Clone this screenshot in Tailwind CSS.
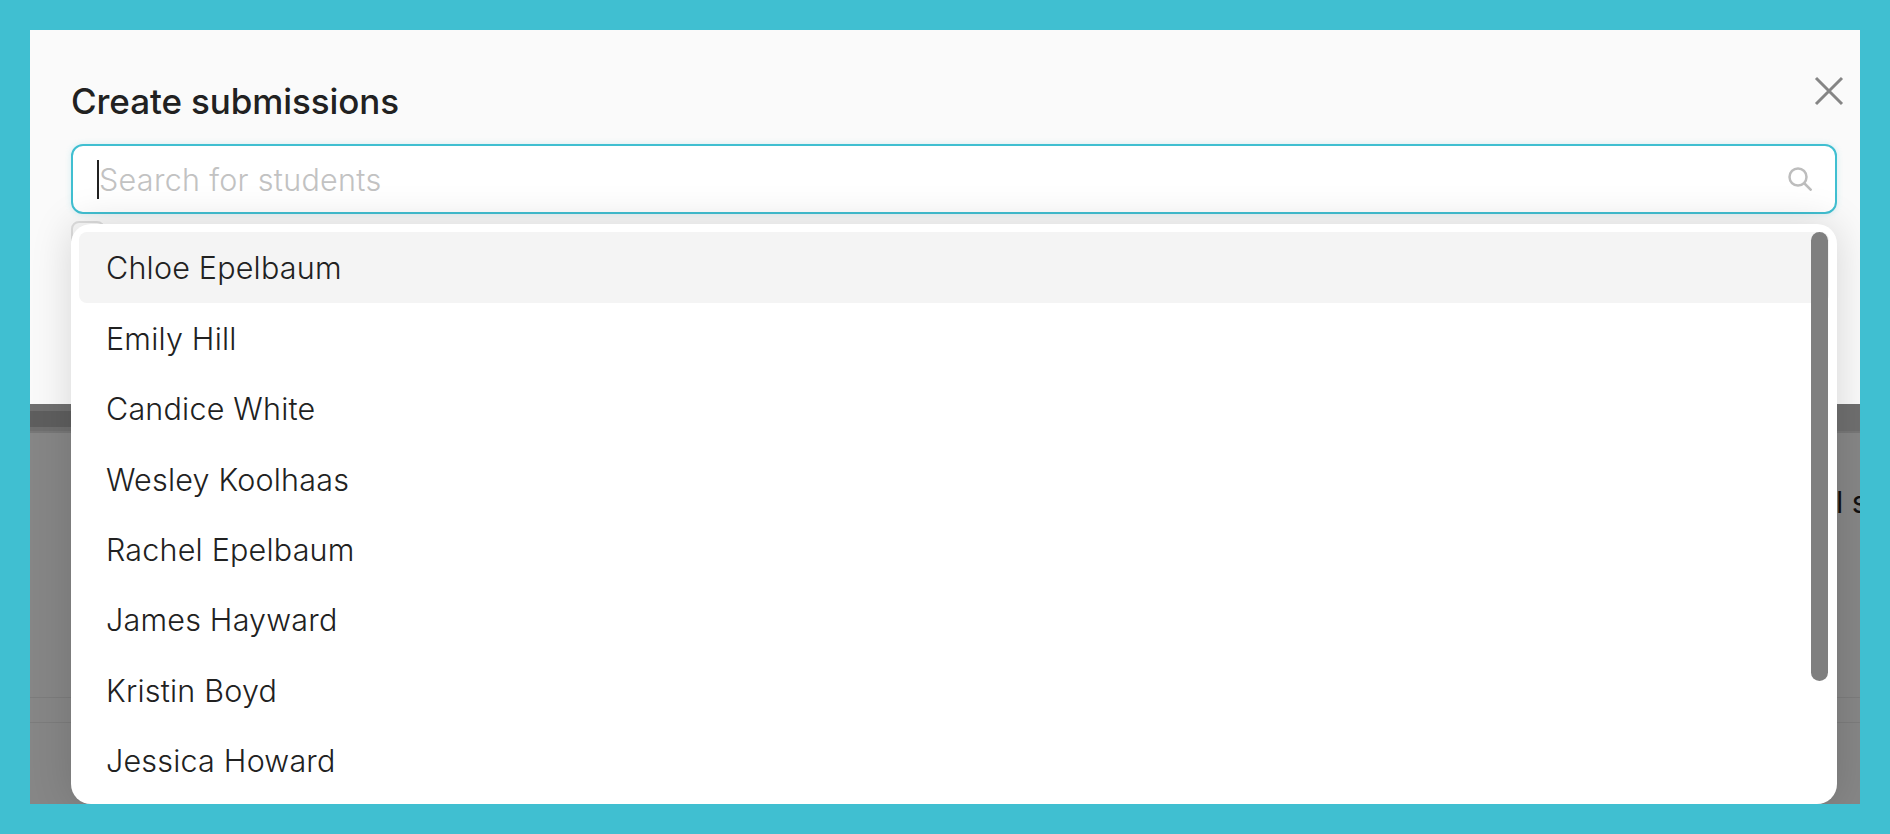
<!DOCTYPE html>
<html lang="en">
<head>
    <meta charset="UTF-8">
    <title>Create submissions</title>
    <script src="https://cdn.jsdelivr.net/npm/@tailwindcss/browser@4"></script>
</head>
<body class="bg-[#40bfd1] font-['Inter',sans-serif]">
    <div class="h-[834px] w-[1890px] p-[30px] overflow-hidden">
        <div class="relative h-[774px] w-[1830px] overflow-hidden bg-[#868686]">
            <!-- Page behind the modal -->
            <div class="absolute left-0 right-0 top-[374px] h-[27px] bg-[#6f6f6f]"></div>
            <div class="absolute left-0 top-[381px] h-[16px] w-[200px] bg-[#5e5e5e]"></div>
            <div class="absolute left-0 right-0 top-[401px] h-[2px] bg-[#777777]"></div>
            <div class="absolute left-0 right-0 top-[667px] h-[1px] bg-[#7c7c7c]"></div>
            <div class="absolute left-0 right-0 top-[692px] h-[1px] bg-[#7c7c7c]"></div>
            <div class="absolute left-[1806px] top-[454px] whitespace-nowrap text-[30px] leading-[36px] text-[#111]">l s</div>

            <!-- Modal -->
            <div class="relative h-[374px] bg-[#fafafa] pl-[41px] pr-[23px] pt-[51px]">
                <h2 class="text-[35px] leading-[40px] font-[550] tracking-[-0.1px] text-[#212121]">Create submissions</h2>
                <button class="absolute right-[16px] top-[46px] text-[#858585]">
                    <svg width="30" height="30" viewBox="0 0 30 30" fill="none" stroke="currentColor" stroke-width="3"><path d="M2 2 28 28M28 2 2 28"/></svg>
                </button>
                <div class="mt-[23px] flex h-[70px] items-center justify-between rounded-[12px] border-2 border-[#40bfd1] bg-white pl-[24px] pr-[23px] shadow-[0_0_6px_rgba(64,191,209,0.2)]">
                    <div class="flex items-center">
                        <span class="h-[39px] w-[2px] bg-[#212121]"></span>
                        <span class="pt-px text-[30.5px] leading-[36px] font-[350] tracking-[0.3px] text-[#c2c2c2]">Search for students</span>
                    </div>
                    <svg width="24" height="24" viewBox="0 0 24 24" fill="none" stroke="#bdbdbd" stroke-width="2.5"><circle cx="10" cy="10" r="8.5"/><path d="M16 16 23.5 23.5"/></svg>
                </div>
                <div class="mt-[7px] h-[20px] w-[34px] rounded-t-[8px] border-2 border-[#dedede]"></div>
            </div>

            <!-- Student dropdown -->
            <div class="absolute left-[41px] top-[194px] h-[580px] w-[1766px] rounded-[20px] bg-white p-[8px] shadow-[0_0_40px_rgba(0,0,0,0.15)]">
                <div class="absolute right-[9px] top-[8px] h-[449px] w-[17px] rounded-full bg-[#7f7f7f]"></div>
                <ul class="text-[30.5px] font-[350] tracking-[0.2px] text-[#212121]">
                    <li class="flex h-[71px] items-center rounded-[8px] bg-[#f4f4f4] pl-[27px]">Chloe Epelbaum</li>
                    <li class="flex h-[70px] items-center pl-[27px] pt-[2px]">Emily Hill</li>
                    <li class="flex h-[70px] items-center pl-[27px] pt-[2px]">Candice White</li>
                    <li class="flex h-[71px] items-center pl-[27px] pt-[2px]">Wesley Koolhaas</li>
                    <li class="flex h-[70px] items-center pl-[27px] pt-[2px]">Rachel Epelbaum</li>
                    <li class="flex h-[70px] items-center pl-[27px] pt-[2px]">James Hayward</li>
                    <li class="flex h-[71px] items-center pl-[27px] pt-[2px]">Kristin Boyd</li>
                    <li class="flex h-[70px] items-center pl-[27px] pt-[2px]">Jessica Howard</li>
                </ul>
            </div>
        </div>
    </div>
</body>
</html>
